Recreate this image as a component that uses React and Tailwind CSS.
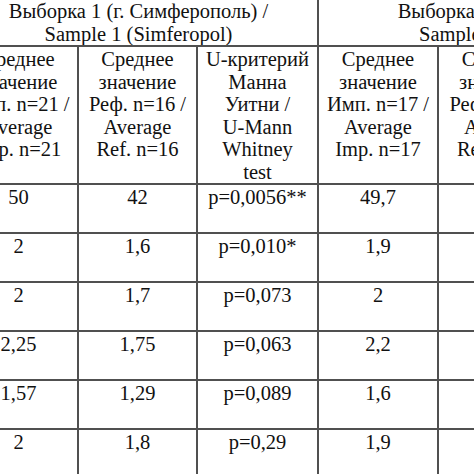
import React from "react";

const rows = [
  ["50", "42", "p=0,0056**", "49,7", "", ""],
  ["2", "1,6", "p=0,010*", "1,9", "", ""],
  ["2", "1,7", "p=0,073", "2", "", ""],
  ["2,25", "1,75", "p=0,063", "2,2", "", ""],
  ["1,57", "1,29", "p=0,089", "1,6", "", ""],
  ["2", "1,8", "p=0,29", "1,9", "", ""],
];

const heads = [
  ["Среднее", "значение", "Имп. n=21 /", "Average", "Imp. n=21"],
  ["Среднее", "значение", "Реф. n=16 /", "Average", "Ref. n=16"],
  ["U-критерий", "Манна", "Уитни /", "U-Mann", "Whitney", "test"],
  ["Среднее", "значение", "Имп. n=17 /", "Average", "Imp. n=17"],
  ["Среднее", "значение", "Реф. n=17 /", "Average", "Ref. n=17"],
  ["U-критерий", "Манна", "Уитни /", "U-Mann", "Whitney", "test"],
];

const cell = "border-2 border-[#505050] align-top text-center px-0 pt-[1px] whitespace-nowrap overflow-hidden";

export default function App() {
  return (
    <div
      className="w-[474px] h-[474px] overflow-hidden bg-white text-[#111]"
      style={{ fontFamily: '"Liberation Serif", "Times New Roman", "DejaVu Serif", serif' }}
    >
      <table className="table-fixed border-collapse w-[719px] min-w-[719px] ml-[-42px] mt-[-1px] text-[20.5px] leading-[22.5px]">
        <colgroup>
          <col className="w-[119px]" />
          <col className="w-[119px]" />
          <col className="w-[121px]" />
          <col className="w-[120px]" />
          <col className="w-[120px]" />
          <col className="w-[120px]" />
        </colgroup>
        <thead>
          <tr className="h-[47px]">
            <th colSpan={3} className={cell + " font-normal border-t-0 pt-0"}>
              Выборка 1 (г. Симферополь) /<br />Sample 1 (Simferopol)
            </th>
            <th colSpan={3} className={cell + " font-normal border-t-0 pt-0 pr-[20px]"}>
              Выборка 2 (г. Ялта) /<br />Sample 2 (Yalta)
            </th>
          </tr>
          <tr className="h-[137px]">
            {heads.map((h, i) => (
              <th key={i} className={cell + " font-normal"}>
                {h.map((l, k) => (
                  <div key={k}>{l}</div>
                ))}
              </th>
            ))}
          </tr>
        </thead>
        <tbody>
          {rows.map((r, i) => (
            <tr key={i} className="h-[49px]">
              {r.map((c, j) => (
                <td key={j} className={cell}>
                  {c}
                </td>
              ))}
            </tr>
          ))}
        </tbody>
      </table>
    </div>
  );
}
